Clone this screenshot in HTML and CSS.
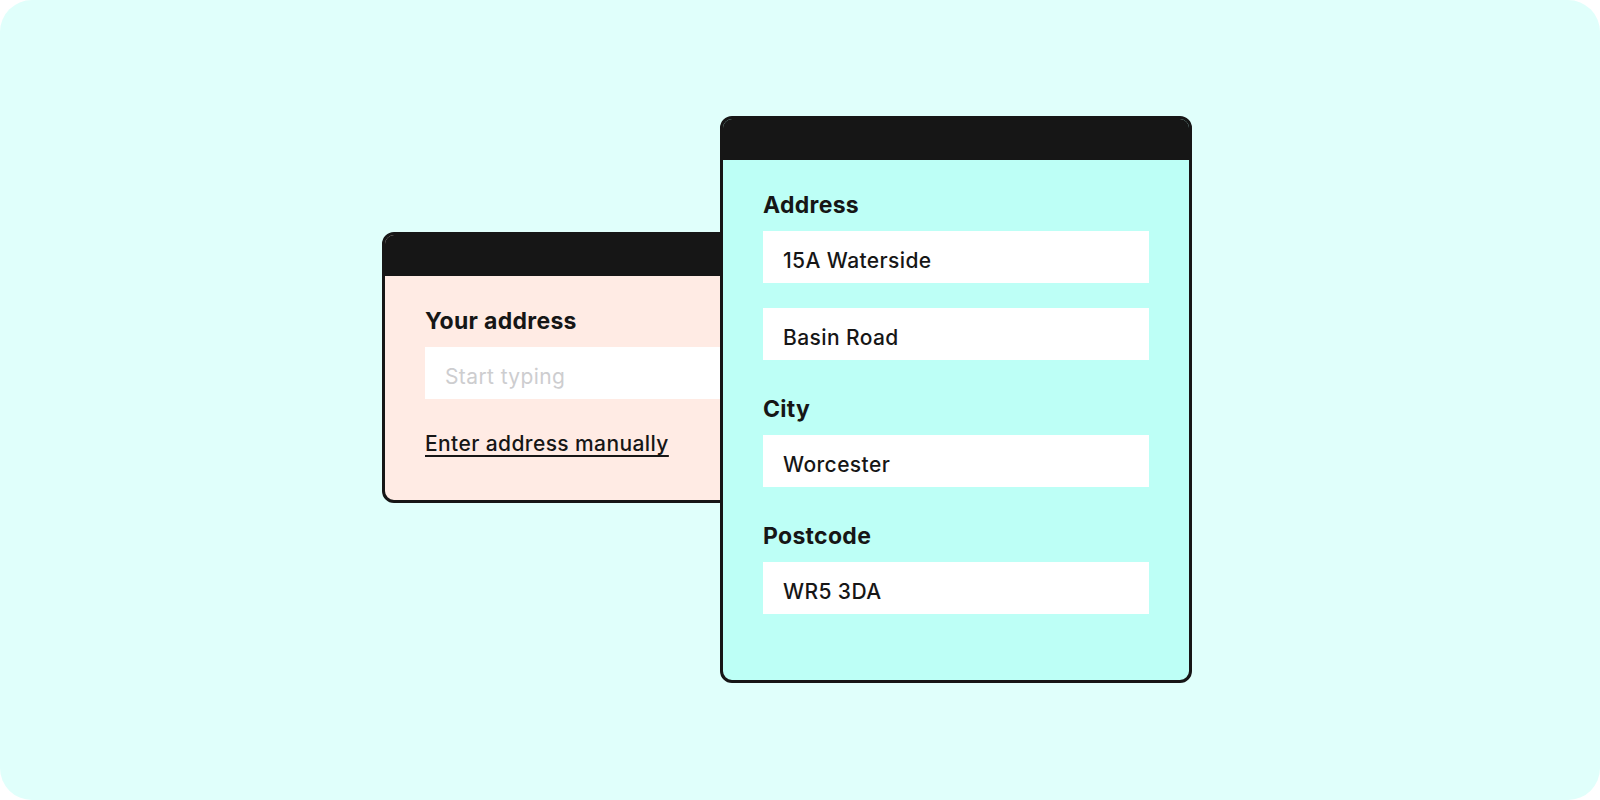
FILE: index.html
```html
<!DOCTYPE html>
<html lang="en">
<head>
<meta charset="utf-8">
<title>Address lookup</title>
<link rel="stylesheet" href="styles.css">
</head>
<body>
  <main class="stage">
    <!-- Lookup form window (behind) -->
    <section class="window window--lookup">
      <div class="window__bar"></div>
      <div class="window__body">
        <div class="field">
          <label class="field__label">Your address</label>
          <div class="field__input field__input--placeholder">Start typing</div>
        </div>
        <a class="manual-link" href="#">Enter address manually</a>
      </div>
    </section>

    <!-- Manual entry window (front) -->
    <section class="window window--manual">
      <div class="window__bar"></div>
      <div class="window__body">
        <div class="field">
          <label class="field__label">Address</label>
          <div class="field__stack">
            <div class="field__input">15A Waterside</div>
            <div class="field__input">Basin Road</div>
          </div>
        </div>
        <div class="field">
          <label class="field__label">City</label>
          <div class="field__input">Worcester</div>
        </div>
        <div class="field">
          <label class="field__label">Postcode</label>
          <div class="field__input">WR5 3DA</div>
        </div>
      </div>
    </section>
  </main>
</body>
</html>
```
FILE: styles.css
```css
* {
  box-sizing: border-box;
}

html,
body {
  margin: 0;
  padding: 0;
  background: #ffffff;
}

body {
  font-family: Inter, "Noto Sans", "Liberation Sans", sans-serif;
  color: #161616;
}

.stage {
  position: relative;
  width: 1600px;
  height: 800px;
  border-radius: 32px;
  background: #e0fffb;
  overflow: hidden;
}

/* Windows sit on a free canvas, overlapping each other */
.window {
  position: absolute;
  border: 3px solid #161616;
  border-radius: 12px;
  overflow: hidden;
}

.window__bar {
  height: 41px;
  background: #161616;
}

.window__body {
  display: flex;
  flex-direction: column;
  padding: 31px 40px 66px;
}

.window--lookup {
  left: 382px;
  top: 232px;
  width: 460px;
  background: #ffebe4;
}

.window--lookup .window__body {
  padding-bottom: 42px;
}

.window--manual {
  left: 720px;
  top: 116px;
  width: 472px;
  background: #bdfff6;
}

.window--manual .window__body {
  gap: 35px;
}

.field {
  display: flex;
  flex-direction: column;
  gap: 12px;
}

.field__label {
  font-size: 23px;
  line-height: 28px;
  font-weight: 700;
  letter-spacing: 0.3px;
}

.field__stack {
  display: flex;
  flex-direction: column;
  gap: 25px;
}

.field__input {
  height: 52px;
  padding: 18px 20px 0;
  background: #ffffff;
  font-size: 21px;
  line-height: 24px;
  font-weight: 500;
  letter-spacing: 0.4px;
  color: #161616;
}

.field__input--placeholder {
  color: #cdcdcf;
  font-weight: 400;
}

.manual-link {
  margin-top: 31px;
  font-size: 21px;
  line-height: 28px;
  font-weight: 500;
  letter-spacing: 0.4px;
  color: #161616;
  text-decoration: underline;
  text-decoration-thickness: 1.5px;
  text-underline-offset: 4px;
  align-self: flex-start;
}
```
